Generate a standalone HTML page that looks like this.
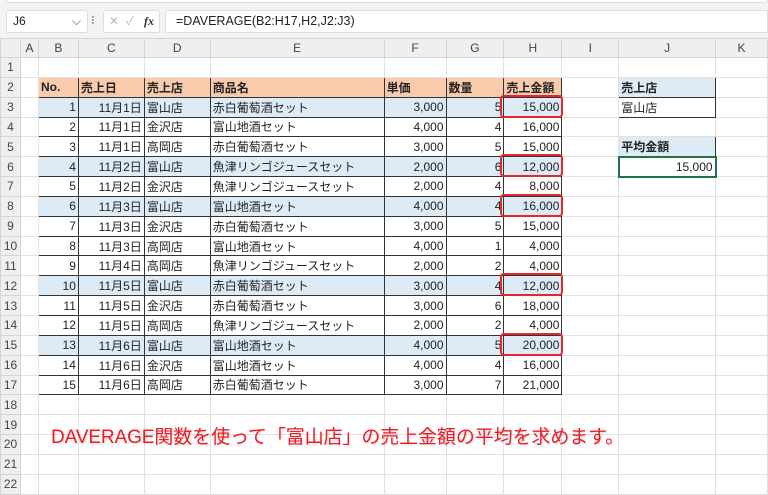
<!DOCTYPE html>
<html><head><meta charset="utf-8"><style>
*{margin:0;padding:0;box-sizing:border-box}
body{width:768px;height:485px;overflow:hidden;background:#fff;font-family:"Liberation Sans","Noto Sans CJK JP",sans-serif;position:relative}
.top{position:absolute;left:0;top:0;width:768px;height:38px;background:#f3f3f3}
.strip{position:absolute;left:6px;top:0;width:762px;height:3px;background:#fff;border:1px solid #ddd;border-top:none;border-radius:0 0 4px 4px}
.nb{position:absolute;left:6px;top:10px;width:82px;height:23px;background:#fff;border:1px solid #ddd;border-radius:3px;font-size:12px;line-height:21px;padding-left:6px;color:#222}
.fx{position:absolute;left:103px;top:10px;width:57px;height:23px;background:#fff;border:1px solid #ddd;border-radius:3px;font-size:12px;color:#bbb;line-height:21px}
.fb{position:absolute;left:165px;top:10px;width:603px;height:23px;background:#fff;border:1px solid #ddd;border-radius:3px 0 0 3px;font-size:12.5px;line-height:21px;padding-left:10px;color:#222}
table{position:absolute;left:0;top:38px;border-collapse:collapse;table-layout:fixed;font-size:12px}
td{height:19.85px;border:1px solid #e1e1e1;padding:0 2px;white-space:nowrap;overflow:hidden;color:#222}
tr.h td{height:19px;background:#efefef;text-align:center;color:#444;border-color:#d4d4d4}
td.r{background:#efefef;text-align:center;color:#444;border-color:#d4d4d4}
.n{text-align:right}
.hd{background:#f8cbad;font-weight:bold;border:1px solid #333!important}
.b{border:1px solid #333!important}
.bl td.c{background:#ddebf7}
.jh{background:#ddebf7;font-weight:bold;border:1px solid #333!important}
.sel{border:2px solid #217346!important}
.box{position:absolute;left:500px;width:63px;height:23px;border:2px solid #e8272b;border-radius:4px}
.msg{position:absolute;left:51px;top:422px;font-size:19px;color:#ee1c24;letter-spacing:-0.1px;text-shadow:1px 1px 2px rgba(0,0,0,.15)}
</style></head><body>
<div class="top"><div class="strip"></div>
<div class="nb">J6<span style="position:absolute;right:6px;color:#555">⌵</span></div>
<div style="position:absolute;left:91px;top:13px;font-size:12px;color:#555">⁝</div>
<div class="fx"><span style="position:absolute;left:5px">✕</span><span style="position:absolute;left:22px">✓</span><span style="position:absolute;left:40px;color:#333;font-style:italic;font-family:'Liberation Serif',serif;font-weight:bold">fx</span></div>
<div class="fb">=DAVERAGE(B2:H17,H2,J2:J3)</div>
</div>
<table>
<colgroup><col style="width:20px"><col style="width:18px"><col style="width:40px"><col style="width:66px"><col style="width:66px"><col style="width:174px"><col style="width:62px"><col style="width:58px"><col style="width:58px"><col style="width:57px"><col style="width:97px"><col style="width:52px"></colgroup>
<tr class="h"><td></td><td>A</td><td>B</td><td>C</td><td>D</td><td>E</td><td>F</td><td>G</td><td>H</td><td>I</td><td>J</td><td>K</td></tr>
<tr><td class="r">1</td><td></td><td></td><td></td><td></td><td></td><td></td><td></td><td></td><td></td><td></td><td></td></tr>
<tr><td class="r">2</td><td></td><td class="hd">No.</td><td class="hd">売上日</td><td class="hd">売上店</td><td class="hd">商品名</td><td class="hd">単価</td><td class="hd">数量</td><td class="hd">売上金額</td><td></td><td class="jh">売上店</td><td></td></tr>
<tr class="bl"><td class="r">3</td><td></td><td class="b c n">1</td><td class="b c n">11月1日</td><td class="b c">富山店</td><td class="b c">赤白葡萄酒セット</td><td class="b c n">3,000</td><td class="b c n">5</td><td class="b c n">15,000</td><td></td><td class="b">富山店</td><td></td></tr>
<tr><td class="r">4</td><td></td><td class="b n">2</td><td class="b n">11月1日</td><td class="b">金沢店</td><td class="b">富山地酒セット</td><td class="b n">4,000</td><td class="b n">4</td><td class="b n">16,000</td><td></td><td></td><td></td></tr>
<tr><td class="r">5</td><td></td><td class="b n">3</td><td class="b n">11月1日</td><td class="b">高岡店</td><td class="b">赤白葡萄酒セット</td><td class="b n">3,000</td><td class="b n">5</td><td class="b n">15,000</td><td></td><td class="jh">平均金額</td><td></td></tr>
<tr class="bl"><td class="r">6</td><td></td><td class="b c n">4</td><td class="b c n">11月2日</td><td class="b c">富山店</td><td class="b c">魚津リンゴジュースセット</td><td class="b c n">2,000</td><td class="b c n">6</td><td class="b c n">12,000</td><td></td><td class="sel n">15,000</td><td></td></tr>
<tr><td class="r">7</td><td></td><td class="b n">5</td><td class="b n">11月2日</td><td class="b">金沢店</td><td class="b">魚津リンゴジュースセット</td><td class="b n">2,000</td><td class="b n">4</td><td class="b n">8,000</td><td></td><td></td><td></td></tr>
<tr class="bl"><td class="r">8</td><td></td><td class="b c n">6</td><td class="b c n">11月3日</td><td class="b c">富山店</td><td class="b c">富山地酒セット</td><td class="b c n">4,000</td><td class="b c n">4</td><td class="b c n">16,000</td><td></td><td></td><td></td></tr>
<tr><td class="r">9</td><td></td><td class="b n">7</td><td class="b n">11月3日</td><td class="b">金沢店</td><td class="b">赤白葡萄酒セット</td><td class="b n">3,000</td><td class="b n">5</td><td class="b n">15,000</td><td></td><td></td><td></td></tr>
<tr><td class="r">10</td><td></td><td class="b n">8</td><td class="b n">11月3日</td><td class="b">高岡店</td><td class="b">富山地酒セット</td><td class="b n">4,000</td><td class="b n">1</td><td class="b n">4,000</td><td></td><td></td><td></td></tr>
<tr><td class="r">11</td><td></td><td class="b n">9</td><td class="b n">11月4日</td><td class="b">高岡店</td><td class="b">魚津リンゴジュースセット</td><td class="b n">2,000</td><td class="b n">2</td><td class="b n">4,000</td><td></td><td></td><td></td></tr>
<tr class="bl"><td class="r">12</td><td></td><td class="b c n">10</td><td class="b c n">11月5日</td><td class="b c">富山店</td><td class="b c">赤白葡萄酒セット</td><td class="b c n">3,000</td><td class="b c n">4</td><td class="b c n">12,000</td><td></td><td></td><td></td></tr>
<tr><td class="r">13</td><td></td><td class="b n">11</td><td class="b n">11月5日</td><td class="b">金沢店</td><td class="b">赤白葡萄酒セット</td><td class="b n">3,000</td><td class="b n">6</td><td class="b n">18,000</td><td></td><td></td><td></td></tr>
<tr><td class="r">14</td><td></td><td class="b n">12</td><td class="b n">11月5日</td><td class="b">高岡店</td><td class="b">魚津リンゴジュースセット</td><td class="b n">2,000</td><td class="b n">2</td><td class="b n">4,000</td><td></td><td></td><td></td></tr>
<tr class="bl"><td class="r">15</td><td></td><td class="b c n">13</td><td class="b c n">11月6日</td><td class="b c">富山店</td><td class="b c">富山地酒セット</td><td class="b c n">4,000</td><td class="b c n">5</td><td class="b c n">20,000</td><td></td><td></td><td></td></tr>
<tr><td class="r">16</td><td></td><td class="b n">14</td><td class="b n">11月6日</td><td class="b">金沢店</td><td class="b">富山地酒セット</td><td class="b n">4,000</td><td class="b n">4</td><td class="b n">16,000</td><td></td><td></td><td></td></tr>
<tr><td class="r">17</td><td></td><td class="b n">15</td><td class="b n">11月6日</td><td class="b">高岡店</td><td class="b">赤白葡萄酒セット</td><td class="b n">3,000</td><td class="b n">7</td><td class="b n">21,000</td><td></td><td></td><td></td></tr>
<tr><td class="r">18</td><td></td><td></td><td></td><td></td><td></td><td></td><td></td><td></td><td></td><td></td><td></td></tr>
<tr><td class="r">19</td><td></td><td></td><td></td><td></td><td></td><td></td><td></td><td></td><td></td><td></td><td></td></tr>
<tr><td class="r">20</td><td></td><td></td><td></td><td></td><td></td><td></td><td></td><td></td><td></td><td></td><td></td></tr>
<tr><td class="r">21</td><td></td><td></td><td></td><td></td><td></td><td></td><td></td><td></td><td></td><td></td><td></td></tr>
<tr><td class="r">22</td><td></td><td></td><td></td><td></td><td></td><td></td><td></td><td></td><td></td><td></td><td></td></tr>
</table>
<div class="box" style="top:95px"></div>
<div class="box" style="top:154px"></div>
<div class="box" style="top:194px"></div>
<div class="box" style="top:273px"></div>
<div class="box" style="top:333px"></div>
<div class="msg">DAVERAGE関数を使って「富山店」の売上金額の平均を求めます。</div>
</body></html>
